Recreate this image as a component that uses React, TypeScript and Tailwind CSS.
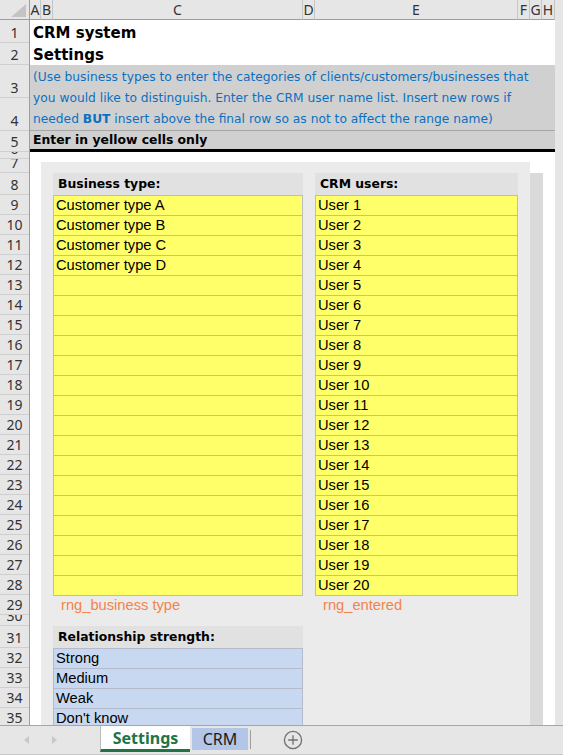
import React from 'react';

const colHeads = [
  { label: 'A', cls: 'w-[11px]' },
  { label: 'B', cls: 'w-[12px]' },
  { label: 'C', cls: 'w-[250px]' },
  { label: 'D', cls: 'w-[12px]' },
  { label: 'E', cls: 'w-[203px]' },
  { label: 'F', cls: 'w-[12px]' },
  { label: 'G', cls: 'w-[12px]' },
  { label: 'H', cls: 'w-[13px]' },
];

// row number + height class, top to bottom
const rowHeads: [number, string][] = [
  [1, 'h-[23px]'],
  [2, 'h-[22px]'],
  [3, 'h-[33px]'],
  [4, 'h-[33px]'],
  [5, 'h-[21px]'],
  [6, 'h-[7px]'],
  [7, 'h-[14px]'],
  [8, 'h-[22px]'],
  ...Array.from({ length: 21 }, (_, i) => [9 + i, 'h-[20px]'] as [number, string]),
  [30, 'h-[11px]'],
  [31, 'h-[22px]'],
  [32, 'h-[20px]'],
  [33, 'h-[20px]'],
  [34, 'h-[20px]'],
  [35, 'h-[20px]'],
];

const businessTypes = ['Customer type A', 'Customer type B', 'Customer type C', 'Customer type D', ...Array(16).fill('')];
const users = Array.from({ length: 20 }, (_, i) => `User ${i + 1}`);
const strengths = ['Strong', 'Medium', 'Weak', "Don't know"];

const tahoma = "font-['DejaVu_Sans',Verdana,sans-serif]";
const arial = "font-['Liberation_Sans',Arial,sans-serif]";
const ui = "font-['Noto_Sans',sans-serif]";

const HeaderCell = ({ text }: { text: string }) => (
  <div className={`h-[22px] shrink-0 bg-[#e1e1e1] flex items-center pl-[5px] ${tahoma} font-bold text-[12.4px] text-black`}>
    {text}
  </div>
);

const CellList = ({ items, tone }: { items: string[]; tone: 'yellow' | 'blue' }) => (
  <div
    className={`shrink-0 border-t border-x ${tone === 'yellow' ? 'border-[#bdbdbd] bg-[#ffff69]' : 'border-[#b4bccb] bg-[#c8d8f0]'}`}
  >
    {items.map((t, i) => (
      <div
        key={i}
        className={`h-[20px] border-b ${tone === 'yellow' ? 'border-[#bdbdbd]' : 'border-[#b4bccb]'} flex items-center pl-[2px] ${arial} text-[14.7px] text-black whitespace-nowrap`}
      >
        {t}
      </div>
    ))}
  </div>
);

const RangeName = ({ text }: { text: string }) => (
  <div className={`h-[19px] shrink-0 flex items-center pl-[8px] ${arial} text-[14.7px] text-[#f4834a]`}>{text}</div>
);

const ColumnHeader = () => (
  <div className="h-[20px] flex shrink-0 bg-[#e6e6e6]">
    <div className="w-[30px] h-full border-r border-b border-[#9e9e9e] relative">
      <svg width="30" height="20" className="absolute inset-0">
        <polygon points="26,4 26,17 11,17" fill="#c4c4c4" />
      </svg>
    </div>
    {colHeads.map((c) => (
      <div
        key={c.label}
        className={`${c.cls} h-full border-r border-[#c6c6c6] border-b border-b-[#9e9e9e] flex items-center justify-center ${ui} text-[14px] text-[#333] leading-none overflow-hidden`}
      >
        {c.label}
      </div>
    ))}
  </div>
);

const RowHeader = () => (
  <div className="w-[30px] shrink-0 bg-[#e6e6e6] border-r border-[#9e9e9e] flex flex-col">
    {rowHeads.map(([n, h]) => (
      <div
        key={n}
        className={`${h} shrink-0 border-b border-[#cfcfcf] flex items-end justify-center overflow-hidden ${ui} text-[14px] leading-[16px] text-[#333] pb-[1px]`}
      >
        {n}
      </div>
    ))}
  </div>
);

const Sheet = () => (
  <div className="w-[525px] shrink-0 flex flex-col bg-white">
    <div className={`h-[23px] shrink-0 flex items-end pl-[3px] pb-[1px] ${tahoma} font-bold text-[15px] leading-[18px] text-black`}>
      CRM system
    </div>
    <div className={`h-[22px] shrink-0 flex items-end pl-[3px] pb-[1px] ${tahoma} font-bold text-[15px] leading-[18px] text-black`}>
      Settings
    </div>
    <div
      className={`h-[66px] shrink-0 bg-[#d0d0d0] border-b border-[#a6a6a6] pl-[3px] pt-[2px] ${tahoma} text-[12.25px] leading-[21px] text-[#0a70c2] whitespace-nowrap`}
    >
      (Use business types to enter the categories of clients/customers/businesses that
      <br />
      you would like to distinguish. Enter the CRM user name list. Insert new rows if
      <br />
      needed <span className="font-bold">BUT</span> insert above the final row so as not to affect the range name)
    </div>
    <div
      className={`h-[21px] shrink-0 bg-[#d0d0d0] border-b-[3px] border-black flex items-center pl-[3px] ${tahoma} font-bold text-[12.4px] leading-[18px] text-black`}
    >
      Enter in yellow cells only
    </div>
    <div className="h-[10px] shrink-0" />
    {/* grey panel with drop shadow holding the lists */}
    <div className="shrink-0 ml-[11px] w-[489px] bg-[#ebebeb] shadow-[13px_11px_0_#dadada] pt-[11px] pl-[12px] pb-[60px] flex gap-[12px]">
      <div className="w-[250px] flex flex-col">
        <HeaderCell text="Business type:" />
        <CellList items={businessTypes} tone="yellow" />
        <RangeName text="rng_business type" />
        <div className="h-[11px] shrink-0" />
        <HeaderCell text="Relationship strength:" />
        <CellList items={strengths} tone="blue" />
      </div>
      <div className="w-[203px] flex flex-col">
        <HeaderCell text="CRM users:" />
        <CellList items={users} tone="yellow" />
        <RangeName text="rng_entered" />
      </div>
    </div>
  </div>
);

const TabBar = () => (
  <div className="h-[30px] shrink-0 bg-[#e6e6e6] border-t border-[#a6a6a6] border-b border-b-[#c8c8c8] flex items-start">
    <div className="w-[100px] h-full flex items-center">
      <svg width="8" height="10" className="ml-[23px]">
        <polygon points="6,1 6,9 1,5" fill="#c8c8c8" />
      </svg>
      <svg width="8" height="10" className="ml-[19px]">
        <polygon points="2,1 2,9 7,5" fill="#c8c8c8" />
      </svg>
    </div>
    <div className="w-[90px] h-[26px] bg-white border-l border-[#bdbdbd] border-b-[3px] border-b-[#217346] flex items-center justify-center">
      <span className={`${ui} font-bold text-[16px] text-[#217346] leading-none`}>Settings</span>
    </div>
    <div className="ml-[2px] mt-[2px] w-[56px] h-[22px] bg-[#b4c6e7] flex items-center justify-center">
      <span className={`${ui} text-[16px] text-[#1a1a1a] leading-none`}>CRM</span>
    </div>
    <div className="ml-[2px] mt-[4px] w-px h-[19px] bg-[#9e9e9e]" />
    <div className="ml-[32px] mt-[4px]">
      <svg width="20" height="20" viewBox="0 0 20 20">
        <circle cx="10" cy="10" r="8.6" fill="none" stroke="#707070" strokeWidth="1.3" />
        <path d="M10 5.2v9.6M5.2 10h9.6" stroke="#707070" strokeWidth="1.3" />
      </svg>
    </div>
  </div>
);

export default function App() {
  return (
    <div className="w-[563px] h-[755px] overflow-hidden flex flex-col bg-[#e6e6e6]">
      <div className="flex shrink-0">
        <ColumnHeader />
        <div className="flex-1 bg-[#e6e6e6]" />
      </div>
      <div className="h-[705px] shrink-0 flex overflow-hidden">
        <RowHeader />
        <Sheet />
        <div className="flex-1 bg-[#e6e6e6]" />
      </div>
      <TabBar />
    </div>
  );
}
